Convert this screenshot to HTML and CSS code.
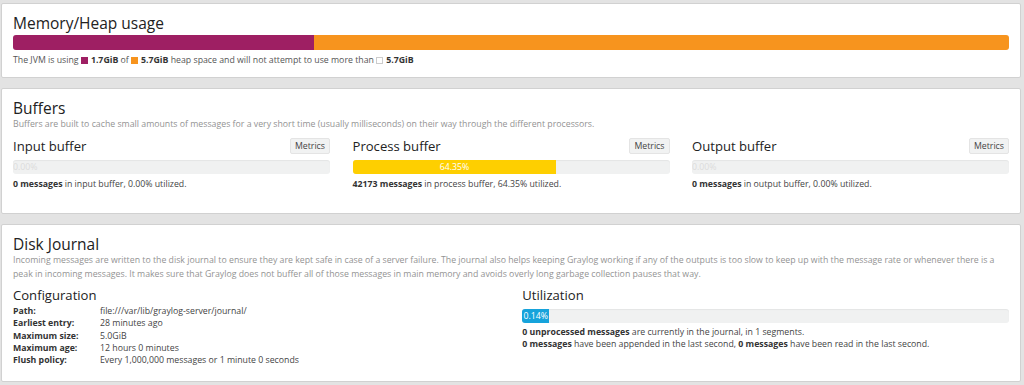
FILE: index.html
```html
<!DOCTYPE html>
<html lang="en">
<head>
<meta charset="utf-8">
<title>System overview</title>
<link rel="stylesheet" href="styles.css">
</head>
<body>
<div class="page">
  <section class="panel panel-heap">
    <h2 class="panel-title">Memory/Heap usage</h2>
    <div class="heap-bar">
      <div class="heap-used" style="width:30.2%"></div>
      <div class="heap-committed" style="width:69.8%"></div>
    </div>
    <p class="heap-text">The JVM is using <span class="swatch swatch-used"></span><strong>1.7GiB</strong> of <span class="swatch swatch-committed"></span><strong>5.7GiB</strong> heap space and will not attempt to use more than <span class="swatch swatch-max"></span><strong>5.7GiB</strong></p>
  </section>

  <section class="panel panel-buffers">
    <h2 class="panel-title">Buffers</h2>
    <p class="description">Buffers are built to cache small amounts of messages for a very short time (usually milliseconds) on their way through the different processors.</p>
    <div class="buffer-grid">
      <div class="buffer">
        <div class="buffer-head">
          <h3 class="buffer-title">Input buffer</h3>
          <button class="btn-metrics">Metrics</button>
        </div>
        <div class="progress"><div class="progress-fill fill-warning" style="width:0%"><span class="progress-label label-empty">0.00%</span></div></div>
        <p class="buffer-text"><strong>0 messages</strong> in input buffer, 0.00% utilized.</p>
      </div>
      <div class="buffer">
        <div class="buffer-head">
          <h3 class="buffer-title">Process buffer</h3>
          <button class="btn-metrics">Metrics</button>
        </div>
        <div class="progress"><div class="progress-fill fill-warning" style="width:64.35%"><span class="progress-label">64.35%</span></div></div>
        <p class="buffer-text"><strong>42173 messages</strong> in process buffer, 64.35% utilized.</p>
      </div>
      <div class="buffer">
        <div class="buffer-head">
          <h3 class="buffer-title">Output buffer</h3>
          <button class="btn-metrics">Metrics</button>
        </div>
        <div class="progress"><div class="progress-fill fill-warning" style="width:0%"><span class="progress-label label-empty">0.00%</span></div></div>
        <p class="buffer-text"><strong>0 messages</strong> in output buffer, 0.00% utilized.</p>
      </div>
    </div>
  </section>

  <section class="panel panel-journal">
    <h2 class="panel-title">Disk Journal</h2>
    <p class="description description-long">Incoming messages are written to the disk journal to ensure they are kept safe in case of a server failure. The journal also helps keeping Graylog working if any of the outputs is too slow to keep up with the message rate or whenever there is a peak in incoming messages. It makes sure that Graylog does not buffer all of those messages in main memory and avoids overly long garbage collection pauses that way.</p>
    <div class="journal-grid">
      <div class="journal-col">
        <h3 class="buffer-title">Configuration</h3>
        <dl class="config">
          <dt>Path:</dt><dd>file:///var/lib/graylog-server/journal/</dd>
          <dt>Earliest entry:</dt><dd>28 minutes ago</dd>
          <dt>Maximum size:</dt><dd>5.0GiB</dd>
          <dt>Maximum age:</dt><dd>12 hours 0 minutes</dd>
          <dt>Flush policy:</dt><dd>Every 1,000,000 messages or 1 minute 0 seconds</dd>
        </dl>
      </div>
      <div class="journal-col">
        <h3 class="buffer-title">Utilization</h3>
        <div class="progress"><div class="progress-fill fill-info fill-min" style="width:0.14%"><span class="progress-label">0.14%</span></div></div>
        <p class="journal-text"><strong>0 unprocessed messages</strong> are currently in the journal, in 1 segments.<br><strong>0 messages</strong> have been appended in the last second, <strong>0 messages</strong> have been read in the last second.</p>
      </div>
    </div>
  </section>
</div>
</body>
</html>
```

FILE: styles.css
```css
* { box-sizing: border-box; }
html, body { margin: 0; padding: 0; }
body {
  background: #e3e3e3;
  font-family: "Open Sans", "DejaVu Sans", sans-serif;
  font-size: 8.75px;
  line-height: 12.4px;
  color: #333333;
}
.page {
  padding: 3px 3px 0 1px;
}
.panel {
  background: #ffffff;
  border: 1px solid #d1d1d1;
  border-radius: 2px;
  padding: 10px 11px 11px 11px;
  margin-bottom: 10px;
}
.panel-title {
  margin: 0;
  font-size: 15.5px;
  line-height: 18px;
  font-weight: 400;
  color: #222;
}
.heap-bar {
  display: flex;
  height: 15px;
  margin-top: 3px;
  border-radius: 3px;
  overflow: hidden;
  background: #f5f5f5;
}
.heap-used { background: #9e1f63; }
.heap-committed { background: #f7941e; }
.heap-text {
  margin: 4px 0 0 0;
  color: #555;
}
.heap-text strong { color: #333; font-weight: 700; }
.swatch {
  display: inline-block;
  width: 7px;
  height: 7px;
  margin-right: 3px;
  vertical-align: -0.5px;
}
.swatch-used { background: #9e1f63; }
.swatch-committed { background: #f7941e; }
.swatch-max { background: #fff; border: 1px solid #ccc; }

.description {
  margin: 1px 0 0 0;
  color: #939393;
}
.description-long { line-height: 13.3px; }
.buffer-grid {
  display: grid;
  grid-template-columns: repeat(3, 1fr);
  column-gap: 22.5px;
  margin-top: 7px;
}
.buffer-head {
  display: flex;
  justify-content: space-between;
  align-items: flex-start;
  height: 16px;
}
.buffer-title {
  margin: 0;
  font-size: 13.1px;
  line-height: 16px;
  font-weight: 400;
  color: #222;
}
.btn-metrics {
  font-family: inherit;
  font-size: 8.75px;
  line-height: 12px;
  padding: 1px 4px;
  height: 16px;
  color: #444;
  background: #f1f2f2;
  border: 1px solid #e4e4e4;
  border-radius: 2px;
}
.progress {
  height: 14px;
  margin-top: 6px;
  background: #f0f1f1;
  border-radius: 3px;
  overflow: hidden;
  position: relative;
  box-shadow: inset 0 1px 1px rgba(0,0,0,0.05);
}
.progress-fill {
  height: 100%;
  position: relative;
  text-align: center;
  color: #fff;
  line-height: 14px;
  font-size: 8.75px;
}
.fill-warning { background: #fecf00; }
.fill-info { background: #16a3db; }
.fill-min { min-width: 27px; }
.progress-label { white-space: nowrap; }
.label-empty {
  position: absolute;
  left: 0;
  top: 0;
  color: #dcdcdc;
}
.buffer-text {
  margin: 4px 0 12px 0;
  color: #444;
}
.buffer-text strong, .journal-text strong { color: #333; }

.journal-grid {
  display: grid;
  grid-template-columns: 1fr 1fr;
  column-gap: 22.5px;
  margin-top: 6px;
}
.journal-text {
  margin: 3px 0 0 0;
  color: #444;
}
.config {
  margin: 2px 0 3px 0;
  display: grid;
  grid-template-columns: 87px 1fr;
}
.config dt { font-weight: 700; color: #333; }
.config dd { margin: 0; color: #444; }
```
